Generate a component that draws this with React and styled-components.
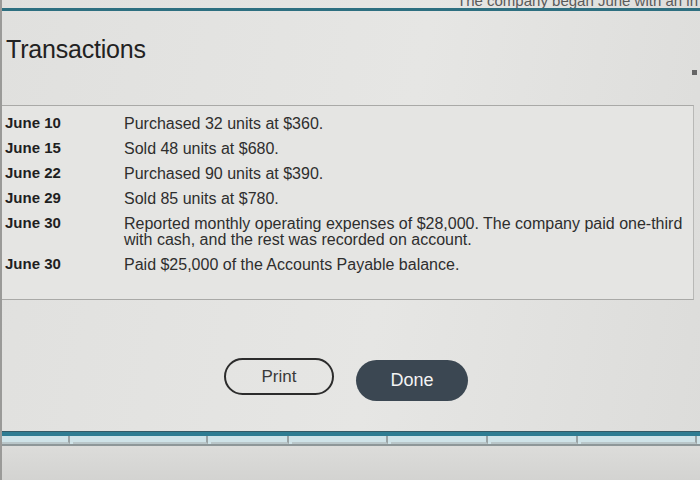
import React from "react";
import styled, { createGlobalStyle } from "styled-components";

const Global = createGlobalStyle`
  html, body { margin: 0; padding: 0; }
  body {
    background: #dfdfdd;
    font-family: "Liberation Sans", Arial, sans-serif;
    width: 700px;
    height: 480px;
    overflow: hidden;
  }
`;

const Page = styled.div`
  position: relative;
  width: 700px;
  height: 480px;
  box-sizing: border-box;
  border-left: 2px solid #9a9a98;
  background: linear-gradient(100deg, #e0e0de 0%, #e6e6e4 55%, #dcdcda 100%);
  display: flex;
  flex-direction: column;
`;

const TopStrip = styled.div`
  height: 8px;
  overflow: hidden;
  border-bottom: 3px solid #2d6f80;
  display: flex;
  justify-content: flex-end;
`;

const TopText = styled.span`
  font-size: 15px;
  line-height: 15px;
  color: #5a5a5a;
  margin-top: -7px;
  white-space: nowrap;
  padding-right: 2px;
`;

const Title = styled.h1`
  margin: 24px 0 0 4px;
  font-size: 25px;
  font-weight: 400;
  color: #222;
  letter-spacing: -0.2px;
`;

const Marker = styled.span`
  position: absolute;
  right: 3px;
  top: 70px;
  width: 5px;
  height: 5px;
  background: #666;
`;

const TableBox = styled.div`
  margin-top: 41px;
  width: 692px;
  box-sizing: border-box;
  border-top: 1px solid #a9a9a7;
  border-right: 1px solid #b8b8b6;
  border-bottom: 1px solid #a9a9a7;
  padding: 8px 0 26px 3px;
  background: #e5e5e3;
  display: grid;
  grid-template-columns: 119px 1fr;
  row-gap: 7px;
`;

const DateCell = styled.div`
  font-weight: 700;
  font-size: 15px;
  line-height: 18px;
  color: #1f1f1f;
`;

const DescCell = styled.div`
  font-size: 16px;
  line-height: 16px;
  padding-top: 2px;
  color: #2e2e2e;
  max-width: 575px;
`;

const Buttons = styled.div`
  margin-top: 58px;
  display: flex;
  justify-content: center;
  align-items: flex-start;
  gap: 22px;
  padding-right: 10px;
`;

const PrintButton = styled.button`
  width: 110px;
  height: 37px;
  border-radius: 19px;
  border: 2px solid #2c2c2c;
  background: transparent;
  font-family: "Liberation Sans", Arial, sans-serif;
  font-size: 17px;
  color: #3a3a3a;
  padding: 0;
`;

const DoneButton = styled.button`
  width: 112px;
  height: 41px;
  margin-top: 2px;
  border-radius: 21px;
  border: none;
  background: #3b4752;
  font-family: "Liberation Sans", Arial, sans-serif;
  font-size: 18px;
  color: #f4f4f4;
  padding: 0;
`;

const BottomBar = styled.div`
  margin-top: 30px;
  height: 4px;
  background: #2e7c92;
  border-top: 1px solid #345a66;
`;

const TabRow = styled.div`
  height: 8px;
  display: flex;
  border-bottom: 2px solid #8e9799;
  background: #cfe3e8;
`;

const Tab = styled.div`
  flex: ${(p) => p.w};
  border-right: 2px solid #9aa3a5;
  border-bottom: 2px solid #b9c6c9;
  margin-right: 3px;
`;

const Below = styled.div`
  flex: 1;
  background: linear-gradient(180deg, #dcdcda 0%, #d3d3d1 100%);
`;

const rows = [
  ["June 10", "Purchased 32 units at $360."],
  ["June 15", "Sold 48 units at $680."],
  ["June 22", "Purchased 90 units at $390."],
  ["June 29", "Sold 85 units at $780."],
  [
    "June 30",
    "Reported monthly operating expenses of $28,000. The company paid one-third with cash, and the rest was recorded on account.",
  ],
  ["June 30", "Paid $25,000 of the Accounts Payable balance."],
];

export default function App() {
  return (
    <>
      <Global />
      <Page>
        <TopStrip>
          <TopText>The company began June with an in</TopText>
        </TopStrip>
        <Title>Transactions</Title>
        <Marker />
        <TableBox>
          {rows.map(([d, t], i) => (
            <React.Fragment key={i}>
              <DateCell>{d}</DateCell>
              <DescCell>{t}</DescCell>
            </React.Fragment>
          ))}
        </TableBox>
        <Buttons>
          <PrintButton>Print</PrintButton>
          <DoneButton>Done</DoneButton>
        </Buttons>
        <BottomBar />
        <TabRow>
          {[70, 140, 80, 100, 100, 90, 120].map((w, i) => (
            <Tab key={i} w={w} />
          ))}
        </TabRow>
        <Below />
      </Page>
    </>
  );
}
